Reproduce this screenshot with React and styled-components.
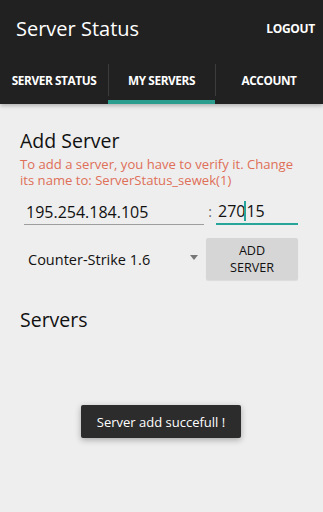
import React from "react";
import styled, { createGlobalStyle } from "styled-components";

const Global = createGlobalStyle`
  html, body { margin: 0; padding: 0; background: #eeeeee; }
  body { font-family: "Open Sans", "Noto Sans", sans-serif; width: 323px; height: 512px; overflow: hidden; }
  * { box-sizing: border-box; }
`;

const Screen = styled.div`
  position: relative;
  width: 323px;
  height: 512px;
  background: #eeeeee;
`;

const Header = styled.header`
  background: #212121;
  box-shadow: 0 2px 4px rgba(0,0,0,0.25);
`;

const Toolbar = styled.div`
  height: 57px;
  display: flex;
  align-items: center;
  justify-content: space-between;
  padding: 0 8px 0 16px;
`;

const Title = styled.h1`
  margin: 0;
  font-size: 20px;
  font-weight: 400;
  color: #ffffff;
  padding-bottom: 1px;
`;

const Action = styled.span`
  color: #ffffff;
  font-size: 12px;
  font-weight: 700;
  letter-spacing: -0.3px;
`;

const Tabs = styled.nav`
  height: 47px;
  display: grid;
  grid-template-columns: 108px 107px 108px;
`;

const Tab = styled.div`
  position: relative;
  display: flex;
  align-items: center;
  justify-content: center;
  color: #ffffff;
  font-size: 11.8px;
  font-weight: 700;
  letter-spacing: -0.4px;
  padding-top: 3px;
  border-bottom: 4px solid ${p => (p.$active ? "#2a9d8f" : "transparent")};
  &::before {
    content: "";
    display: ${p => (p.$divider ? "block" : "none")};
    position: absolute;
    left: 0;
    top: 7px;
    bottom: 4px;
    width: 1px;
    background: #3c3c3c;
  }
`;

const Content = styled.main`
  padding: 24px 25px 0 20px;
`;

const SectionTitle = styled.h2`
  margin: 0;
  font-size: 19.5px;
  font-weight: 400;
  color: #111111;
  line-height: 26px;
`;

const Notice = styled.p`
  margin: 2px 0 0;
  font-size: 13.1px;
  line-height: 16px;
  color: #df6f58;
`;

const InputRow = styled.div`
  display: flex;
  align-items: flex-end;
  margin-top: 11px;
  padding-left: 4px;
`;

const Field = styled.div`
  width: ${p => p.$w}px;
  height: 26px;
  display: flex;
  align-items: center;
  font-size: 16px;
  color: #111111;
  padding-left: 2px;
  border-bottom: ${p => (p.$focused ? "2px solid #26a69a" : "1.5px solid #9e9e9e")};
`;

const Colon = styled.span`
  width: 12px;
  text-align: center;
  font-size: 14px;
  color: #666;
  padding-bottom: 4px;
`;

const Cursor = styled.span`
  display: inline-block;
  width: 2px;
  height: 20px;
  background: #26a69a;
  margin: 0 0 0 -1px;
  vertical-align: middle;
`;

const ControlRow = styled.div`
  display: flex;
  align-items: center;
  margin-top: 13px;
  padding-left: 8px;
`;

const Spinner = styled.div`
  width: 178px;
  display: flex;
  align-items: center;
  justify-content: space-between;
  padding-right: 8px;
  font-size: 14.5px;
  color: #111111;
`;

const Arrow = styled.span`
  width: 0;
  height: 0;
  border-left: 4px solid transparent;
  border-right: 4px solid transparent;
  border-top: 5px solid #777;
  margin-top: -4px;
`;

const Button = styled.button`
  width: 92px;
  height: 42px;
  border: none;
  border-radius: 2px;
  background: #d6d6d6;
  box-shadow: 0 1px 1px rgba(0,0,0,0.08);
  font-family: inherit;
  color: #111111;
  padding: 0;
  display: flex;
  flex-direction: column;
  align-items: center;
  justify-content: center;
`;

const ButtonLine = styled.span`
  display: block;
  font-size: 12.6px;
  line-height: 17.5px;
  height: 17.5px;
`;

const Servers = styled(SectionTitle)`
  margin-top: 27px;
`;

const Toast = styled.div`
  position: absolute;
  left: 81px;
  top: 405px;
  width: 160px;
  height: 33px;
  display: flex;
  align-items: center;
  justify-content: center;
  background: #2c2c2c;
  border-radius: 2px;
  box-shadow: 0 2px 6px rgba(0,0,0,0.3);
  color: #ffffff;
  font-size: 13px;
`;

export default function App() {
  return (
    <Screen>
      <Global />
      <Header>
        <Toolbar>
          <Title>Server Status</Title>
          <Action>LOGOUT</Action>
        </Toolbar>
        <Tabs>
          <Tab>SERVER STATUS</Tab>
          <Tab $active $divider>MY SERVERS</Tab>
          <Tab $divider>ACCOUNT</Tab>
        </Tabs>
      </Header>
      <Content>
        <SectionTitle>Add Server</SectionTitle>
        <Notice>
          To add a server, you have to verify it. Change its name to: ServerStatus_sewek(1)
        </Notice>
        <InputRow>
          <Field $w={180}>195.254.184.105</Field>
          <Colon>:</Colon>
          <Field $w={82} $focused>
            270<Cursor />15
          </Field>
        </InputRow>
        <ControlRow>
          <Spinner>
            <span>Counter-Strike 1.6</span>
            <Arrow />
          </Spinner>
          <Button>
            <ButtonLine>ADD</ButtonLine>
            <ButtonLine>SERVER</ButtonLine>
          </Button>
        </ControlRow>
        <Servers>Servers</Servers>
      </Content>
      <Toast>Server add succefull !</Toast>
    </Screen>
  );
}
